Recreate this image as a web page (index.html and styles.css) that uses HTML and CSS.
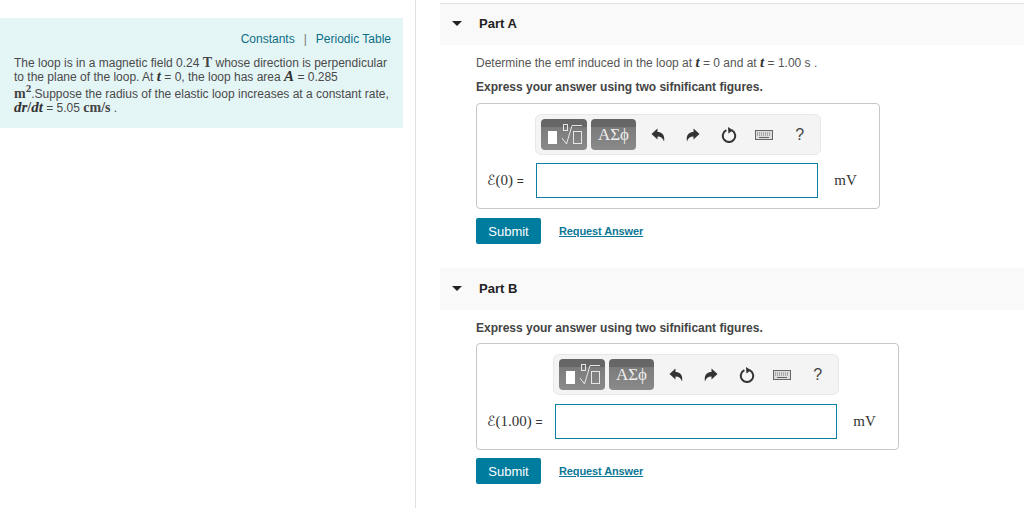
FILE: index.html
```html
<!DOCTYPE html>
<html lang="en">
<head>
    <meta charset="UTF-8">
    <title>Part A and Part B</title>
    <link rel="stylesheet" href="styles.css">
</head>
<body>
    <svg class="icon-defs" width="0" height="0">
        <symbol id="undo" viewBox="0 0 14 14"><path d="M.5 6 L6.5 .5 V4 C11 4 14.2 7 13 13.5 C12 10 10 8.5 6.5 8.5 V11.5 Z"/></symbol>
        <symbol id="redo" viewBox="0 0 14 14"><path d="M13.5 6 L7.5 .5 V4 C3 4 -.2 7 1 13.5 C2 10 4 8.5 7.5 8.5 V11.5 Z"/></symbol>
        <symbol id="reload" viewBox="0 0 16 16"><path d="M5.4 3.2 A6.2 6.2 0 1 0 10.6 3.2" fill="none" stroke="#333" stroke-width="2"/><path d="M7 0 L12 3.2 L7.4 6.6 Z" fill="#333"/></symbol>
        <symbol id="keyboard" viewBox="0 0 18 10"><rect x=".5" y=".5" width="17" height="9" fill="#ddd" stroke="#666"/><path d="M2 3 H16 M2 5 H16" stroke="#777" stroke-dasharray="1 1"/><path d="M4 7.5 H14" stroke="#666"/></symbol>
        <symbol id="templates" viewBox="0 0 46 31"><rect x="7" y="12" width="9" height="13" fill="#fff"/><g fill="none" stroke="#e6e6e6"><rect x="22.5" y="5.5" width="4" height="6"/><path d="M21 19 L25.5 25 L31 6.5 H41"/><rect x="32.5" y="12.5" width="8" height="12"/></g></symbol>
    </svg>

    <div class="page">
        <aside class="side">
            <div class="intro">
                <div class="intro-links">
                    <a>Constants</a><span class="sep">|</span><a>Periodic Table</a>
                </div>
                <p>The loop is in a magnetic field 0.24 <span class="math-b">T</span> whose direction is perpendicular<br>to the plane of the loop. At <span class="math-i">t</span> = 0, the loop has area <span class="math-i">A</span> = 0.285<br><span class="math-b">m<sup>2</sup></span>.Suppose the radius of the elastic loop increases at a constant rate,<br><span class="math-i">dr</span><span class="math-b">/</span><span class="math-i">dt</span> = 5.05 <span class="math-b">cm/s</span> .</p>
            </div>
        </aside>

        <main class="parts">
            <section class="part part-a">
                <div class="part-header"><span class="caret"></span><h2>Part A</h2></div>
                <div class="part-body">
                    <p class="question">Determine the emf induced in the loop at <span class="math-i">t</span> = 0 and at <span class="math-i">t</span> = 1.00 s .</p>
                    <p class="hint">Express your answer using two sifnificant figures.</p>
                    <div class="answer-box box-a">
                        <div class="toolbar">
                            <div class="tool-btn tool-templates"><svg width="46" height="31"><use href="#templates"/></svg></div>
                            <div class="tool-btn tool-symbols">ΑΣϕ</div>
                            <div class="tool-icons">
                                <svg width="14" height="14"><use href="#undo"/></svg>
                                <svg width="14" height="14"><use href="#redo"/></svg>
                                <svg width="16" height="16"><use href="#reload"/></svg>
                                <svg width="18" height="10"><use href="#keyboard"/></svg>
                                <span class="ico-help">?</span>
                            </div>
                        </div>
                        <div class="answer-row">
                            <label class="answer-label"><span class="script-e">ℰ</span>(0) <span class="eq">=</span></label>
                            <div class="answer-input"></div>
                            <span class="unit">mV</span>
                        </div>
                    </div>
                    <div class="actions">
                        <button class="submit">Submit</button>
                        <a class="request">Request Answer</a>
                    </div>
                </div>
            </section>

            <section class="part part-b">
                <div class="part-header"><span class="caret"></span><h2>Part B</h2></div>
                <div class="part-body">
                    <p class="hint">Express your answer using two sifnificant figures.</p>
                    <div class="answer-box box-b">
                        <div class="toolbar">
                            <div class="tool-btn tool-templates"><svg width="46" height="31"><use href="#templates"/></svg></div>
                            <div class="tool-btn tool-symbols">ΑΣϕ</div>
                            <div class="tool-icons">
                                <svg width="14" height="14"><use href="#undo"/></svg>
                                <svg width="14" height="14"><use href="#redo"/></svg>
                                <svg width="16" height="16"><use href="#reload"/></svg>
                                <svg width="18" height="10"><use href="#keyboard"/></svg>
                                <span class="ico-help">?</span>
                            </div>
                        </div>
                        <div class="answer-row">
                            <label class="answer-label"><span class="script-e">ℰ</span>(1.00) <span class="eq">=</span></label>
                            <div class="answer-input"></div>
                            <span class="unit">mV</span>
                        </div>
                    </div>
                    <div class="actions">
                        <button class="submit">Submit</button>
                        <a class="request">Request Answer</a>
                    </div>
                </div>
            </section>
        </main>
    </div>
</body>
</html>
```

FILE: styles.css
```css
body {
    margin: 0;
    background: #fff;
    color: #444;
    font-family: "Liberation Sans", Arial, sans-serif;
    font-size: 12px;
}

.icon-defs {
    display: block;
    height: 0;
}

.page {
    display: flex;
    height: 508px;
    overflow: hidden;
}

.side {
    box-sizing: border-box;
    width: 416px;
    flex: none;
    padding-top: 18px;
    border-right: 1px solid #dcdfe3;
}

.intro {
    box-sizing: border-box;
    width: 403px;
    height: 110px;
    padding: 14px 12px 0 14px;
    background: #e4f5f6;
}

.intro-links {
    text-align: right;
    color: #0d6f86;
    line-height: 15px;
    margin-bottom: 9px;
}

.sep {
    margin: 0 9px;
    color: #777;
}

.intro p {
    margin: 0;
    line-height: 14px;
    color: #4a4a4a;
    white-space: nowrap;
}

.math-i {
    font-family: "Liberation Serif", serif;
    font-style: italic;
    font-weight: bold;
    font-size: 15px;
    line-height: 0;
    color: #333;
}

.math-b {
    font-family: "Liberation Serif", serif;
    font-weight: bold;
    font-size: 14px;
    line-height: 0;
    color: #444;
}

sup {
    font-size: 11px;
    line-height: 9px;
}

.parts {
    flex: 1;
    padding: 3px 0 0 24px;
}

.part-header {
    box-sizing: border-box;
    display: flex;
    align-items: center;
    height: 42px;
    background: #f9f9f9;
}

.part-a .part-header {
    padding-bottom: 2px;
    border-top: 1px solid #e3e3e3;
}

.part-b .part-header {
    padding-bottom: 1px;
}

.caret {
    width: 0;
    height: 0;
    margin-left: 12px;
    border-left: 5px solid transparent;
    border-right: 5px solid transparent;
    border-top: 5px solid #222;
}

.part-header h2 {
    margin: 0 0 0 17px;
    font-size: 13px;
    font-weight: bold;
    color: #222;
}

.part-body {
    padding-left: 36px;
}

.question {
    margin: 11px 0 0;
    line-height: 15px;
    color: #555;
}

.hint {
    margin: 9px 0 0;
    line-height: 15px;
    font-weight: bold;
    color: #444;
}

.part-b .hint {
    margin-top: 11px;
}

.answer-box {
    box-sizing: border-box;
    margin-top: 8px;
    border: 1px solid #c6c6c6;
    border-radius: 4px;
}

.box-a {
    width: 404px;
    height: 106px;
}

.box-b {
    width: 423px;
    height: 107px;
    margin-top: 7px;
}

.toolbar {
    box-sizing: border-box;
    display: flex;
    align-items: center;
    gap: 4px;
    width: 286px;
    height: 41px;
    padding-left: 5px;
    background: #f4f4f4;
    border: 1px solid #e8e8e8;
    border-radius: 6px;
    margin-top: 10px;
}

.box-a .toolbar {
    margin-left: 58px;
}

.box-b .toolbar {
    margin-left: 76px;
}

.tool-btn {
    display: flex;
    align-items: center;
    justify-content: center;
    height: 31px;
    border-radius: 4px;
    background: linear-gradient(#666 0 8px, #7b7b7b 8px, #8a8a8a);
    color: #eee;
    font-family: "Liberation Serif", serif;
    font-size: 17px;
}

.tool-templates {
    width: 46px;
}

.tool-symbols {
    width: 45px;
}

.tool-icons {
    display: grid;
    grid-template-columns: repeat(5, 35.5px);
    align-items: center;
    justify-items: center;
    fill: #333;
}

.ico-help {
    font-size: 16px;
    color: #444;
}

.answer-row {
    display: flex;
    align-items: center;
    height: 35px;
    margin-top: 8px;
    padding-left: 10px;
    font-family: "Liberation Serif", serif;
    font-size: 15px;
    color: #333;
}

.box-b .answer-row {
    margin-top: 9px;
}

.answer-label {
    flex: 1;
    white-space: nowrap;
}

.script-e {
    font-family: "DejaVu Sans", serif;
    font-size: 14px;
}

.eq {
    font-family: "Liberation Sans", sans-serif;
    font-size: 12px;
}

.answer-input {
    box-sizing: border-box;
    flex: none;
    width: 282px;
    height: 35px;
    border: 1px solid #0d7fa0;
    background: #fff;
}

.unit {
    flex: none;
    width: 55px;
    padding-right: 6px;
    text-align: center;
    font-size: 15px;
}

.actions {
    display: flex;
    align-items: center;
    margin-top: 9px;
}

.box-b + .actions {
    margin-top: 8px;
}

.submit {
    width: 65px;
    height: 26px;
    padding: 0;
    border: 0;
    border-radius: 2px;
    background: #007c9e;
    color: #fff;
    font-family: "Liberation Sans", sans-serif;
    font-size: 13px;
}

.request {
    margin-left: 18px;
    color: #0d7896;
    font-size: 11px;
    font-weight: bold;
    letter-spacing: -0.01em;
    text-decoration: underline;
}

.part-b {
    margin-top: 24px;
}
```
